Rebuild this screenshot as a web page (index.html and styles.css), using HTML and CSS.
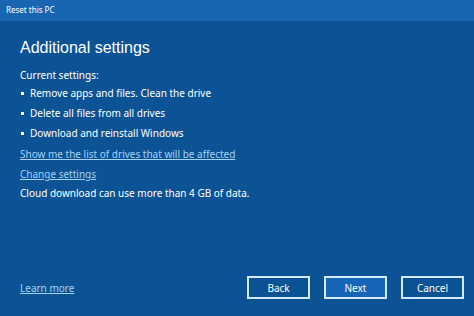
FILE: index.html
```html
<!DOCTYPE html>
<html lang="en">
<head>
  <meta charset="UTF-8" />
  <title>Reset this PC</title>
  <link rel="stylesheet" href="styles.css">
</head>
<body>
  <div class="window">
    <header class="titlebar">Reset this PC</header>

    <main class="content">
      <h1>Additional settings</h1>
      <p class="label">Current settings:</p>
      <ul class="settings">
        <li>Remove apps and files. Clean the drive</li>
        <li>Delete all files from all drives</li>
        <li>Download and reinstall Windows</li>
      </ul>
      <a href="#" class="link">Show me the list of drives that will be affected</a>
      <a href="#" class="link">Change settings</a>
      <p class="note">Cloud download can use more than 4 GB of data.</p>
    </main>

    <footer class="footer">
      <a href="#" class="link">Learn more</a>
      <div class="buttons">
        <button class="btn">Back</button>
        <button class="btn primary">Next</button>
        <button class="btn">Cancel</button>
      </div>
    </footer>
  </div>
</body>
</html>
```

FILE: styles.css
```css
* {
  box-sizing: border-box;
}

body {
  margin: 0;
  font-family: 'Noto Sans', 'Open Sans', sans-serif;
  background: #0b5394;
  color: #fff;
}

.window {
  width: 474px;
  height: 316px;
  display: flex;
  flex-direction: column;
}

.titlebar {
  height: 21px;
  background: #1866b1;
  font-size: 8px;
  line-height: 20px;
  padding-left: 6px;
}

.content {
  flex: 1;
  padding: 16px 20px 0;
  display: flex;
  flex-direction: column;
  align-items: flex-start;
}

h1 {
  margin: 0 0 8px;
  font-family: 'Liberation Sans', Arial, sans-serif;
  font-size: 16px;
  font-weight: 400;
  line-height: 22px;
}

.label {
  margin: 0;
  font-size: 10px;
  line-height: 16px;
}

.settings {
  list-style: none;
  margin: 0 0 1px;
  padding: 0;
}

.settings li {
  font-size: 10px;
  line-height: 20px;
}

.settings li::before {
  content: "";
  display: inline-block;
  width: 3px;
  height: 3px;
  background: #fff;
  margin: 0 6px 1px 1px;
  vertical-align: middle;
}

.link {
  color: #a3d1f7;
  font-size: 10px;
  line-height: 20px;
  text-decoration: underline;
}

.note {
  margin: -1px 0 0;
  font-size: 10px;
  line-height: 20px;
}

.footer {
  padding: 0 10px 17px 20px;
  display: flex;
  align-items: center;
  justify-content: space-between;
}

.buttons {
  display: flex;
  gap: 14px;
}

.btn {
  width: 63px;
  height: 23px;
  background: #0b5394;
  border: 2px solid #d3eafa;
  color: #fff;
  font-family: inherit;
  font-size: 10px;
  padding: 0;
}

.btn.primary {
  background: #1565b8;
}
```
